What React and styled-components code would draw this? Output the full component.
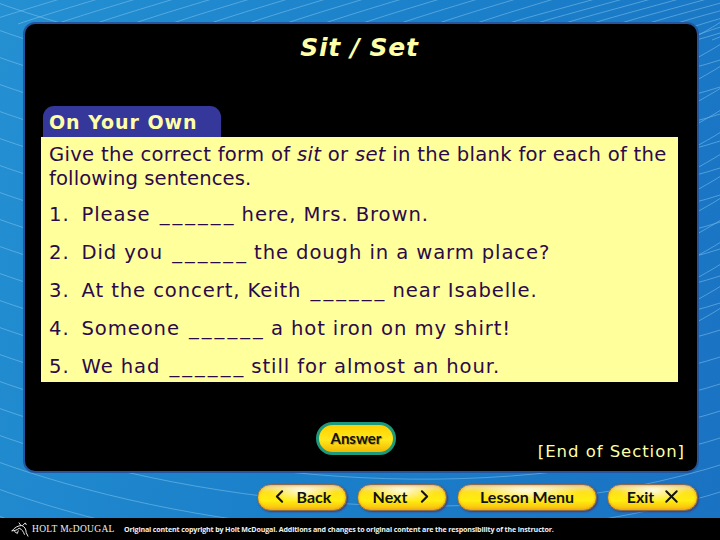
import React from "react";
import styled, { createGlobalStyle } from "styled-components";
import { ChevronLeft, ChevronRight, X } from "lucide-react";

const GlobalStyle = createGlobalStyle`
  html, body {
    margin: 0;
    padding: 0;
    background: #000;
  }
`;

const BLANK = "______";

const questions = [
  ["Please", "here, Mrs. Brown."],
  ["Did you", "the dough in a warm place?"],
  ["At the concert, Keith", "near Isabelle."],
  ["Someone", "a hot iron on my shirt!"],
  ["We had", "still for almost an hour."],
];

const Waves = () => {
  const lines = [];
  for (let i = 0; i < 22; i++) {
    const y = i * 27 - 40;
    lines.push(
      <path key={i} d={`M-10 ${y + 40} C 180 ${y + 110}, 480 ${y + 150}, 730 ${y + 70}`} />
    );
  }
  const upper = [];
  for (let i = 0; i < 14; i++) {
    upper.push(
      <path
        key={i}
        d={`M${460 + i * 28} 40 C ${510 + i * 28} 20, ${560 + i * 28} 10, ${640 + i * 28} -14`}
      />
    );
    upper.push(
      <path
        key={`r${i}`}
        d={`M690 ${40 + i * 22} C 700 ${34 + i * 22}, 712 ${28 + i * 22}, 724 ${20 + i * 22}`}
      />
    );
    upper.push(
      <path key={`t${i}`} d={`M${-20 + i * 38} 24 C ${10 + i * 38} 14, ${30 + i * 38} 8, ${70 + i * 38} -4`} />
    );
  }
  return (
    <WaveArt viewBox="0 0 720 518" preserveAspectRatio="none">
      <g fill="none" stroke="#8ccbf0" strokeWidth="0.7" opacity="0.7">
        {lines}
        {upper}
      </g>
    </WaveArt>
  );
};

const App = () => {
  return (
    <Page>
      <GlobalStyle />
      <Stage>
        <Waves />
        <Panel>
          <Title>Sit / Set</Title>
          <Tab>On Your Own</Tab>
          <Card>
            <Intro>
              Give the correct form of <em>sit</em> or <em>set</em> in the blank for each of the
              following sentences.
            </Intro>
            <Questions>
              {questions.map(([before, after], i) => (
                <Question key={i}>
                  <span>{i + 1}.</span>
                  <span>
                    {before} <Blank>{BLANK}</Blank> {after}
                  </span>
                </Question>
              ))}
            </Questions>
          </Card>
          <PanelBottom>
            <AnswerButton>Answer</AnswerButton>
            <EndNote>[End of Section]</EndNote>
          </PanelBottom>
        </Panel>
        <Nav>
          <NavButton $width={90} $shift={-2}>
            <ChevronLeft size={21} strokeWidth={2.4} />
            Back
          </NavButton>
          <NavButton $width={90} $shift={2}>
            Next
            <ChevronRight size={21} strokeWidth={2.4} />
          </NavButton>
          <NavButton $width={140}>Lesson Menu</NavButton>
          <NavButton $width={91} $shift={2}>
            Exit
            <X size={21} strokeWidth={2.2} />
          </NavButton>
        </Nav>
      </Stage>
      <Footer>
        <Logo viewBox="0 0 20 17">
          <g fill="none" stroke="#eee" strokeWidth="1.1" strokeLinecap="round">
            <path d="M1 10 C4 6 8 4 12 4 C15 5 17 8 17 12 L19 16" />
            <path d="M1 10 C4 10 7 9 9 7 C12 8 14 11 15 14" />
            <path d="M11 4 L9 1 M13 4 L16 1 L17 3" />
            <path d="M4 11 L7 13 L8 10" />
          </g>
        </Logo>
        <Brand>
          HOLT M<small>c</small>DOUGAL
        </Brand>
        <Legal>
          Original content copyright by Holt McDougal. Additions and changes to original content are
          the responsibility of the instructor.
        </Legal>
      </Footer>
    </Page>
  );
};

const Page = styled.div`
  width: 720px;
  height: 540px;
  display: flex;
  flex-direction: column;
  overflow: hidden;
  font-family: "DejaVu Sans", Verdana, sans-serif;
`;

const Stage = styled.div`
  position: relative;
  height: 518px;
  box-sizing: border-box;
  padding: 22px 21px 0 23px;
  display: flex;
  flex-direction: column;
  background: linear-gradient(110deg, #2490d2 0%, #1b80ca 50%, #1a72c2 100%);
`;

const WaveArt = styled.svg`
  position: absolute;
  inset: 0;
  width: 720px;
  height: 518px;
`;

const Panel = styled.div`
  position: relative;
  box-sizing: border-box;
  width: 676px;
  height: 451px;
  padding: 0 19px 0 16px;
  background: #000;
  border: 2px solid #24559f;
  border-radius: 12px;
  display: flex;
  flex-direction: column;
`;

const Title = styled.h1`
  margin: 0;
  height: 82px;
  padding-top: 8px;
  box-sizing: border-box;
  text-align: center;
  color: #ffffa8;
  font-size: 25px;
  line-height: 32px;
  font-weight: bold;
  font-style: italic;
  letter-spacing: 0.7px;
`;

const Tab = styled.div`
  box-sizing: border-box;
  width: 178px;
  height: 31px;
  margin-left: 2px;
  padding: 5px 0 0 6px;
  background: #35379b;
  border-radius: 11px 11px 0 0;
  color: #ffffa8;
  font-size: 19px;
  line-height: 23px;
  font-weight: bold;
  letter-spacing: 0.95px;
`;

const Card = styled.div`
  box-sizing: border-box;
  width: 637px;
  height: 245px;
  padding: 6px 8px 0;
  background: #ffff9c;
  color: #2b0a4a;
  font-size: 19.6px;
  line-height: 24px;
`;

const Intro = styled.p`
  margin: 0;
  letter-spacing: 0.1px;
  &::first-line {
    letter-spacing: 0.29px;
  }
`;

const Questions = styled.ol`
  list-style: none;
  margin: 12px 0 0;
  padding: 0;
  display: flex;
  flex-direction: column;
  gap: 14px;
`;

const Question = styled.li`
  display: flex;
  gap: 12px;
  letter-spacing: 0.9px;
`;

const Blank = styled.span`
  margin: 0 -2px 0 2px;
  letter-spacing: 3px;
`;

const PanelBottom = styled.div`
  display: flex;
  flex: 1;
  justify-content: space-between;
`;

const AnswerButton = styled.button`
  box-sizing: border-box;
  flex: none;
  width: 80px;
  height: 33px;
  margin: 40px 0 0 275px;
  padding: 0 0 2px;
  border: 3px solid #1d9a7c;
  border-radius: 17px;
  background: linear-gradient(180deg, #ffd000 0%, #ffe81c 55%, #f3b600 100%);
  color: #111;
  font-family: Lato, sans-serif;
  font-size: 15px;
  font-weight: 700;
  text-shadow: 1px 1px 0 #caa000;
  cursor: pointer;
`;

const EndNote = styled.div`
  flex: none;
  margin: 57px -7px 0 0;
  color: #ffffa8;
  font-size: 16.5px;
  line-height: 26px;
  letter-spacing: 0.95px;
  white-space: nowrap;
`;

const Nav = styled.div`
  position: relative;
  display: flex;
  gap: 10px;
  margin: 11px 0 0 234px;
`;

const NavButton = styled.button`
  box-sizing: border-box;
  flex: none;
  width: ${(props) => props.$width}px;
  height: 27px;
  padding: 0 ${(props) => Math.max(0, -(props.$shift || 0)) * 2}px 3px
    ${(props) => Math.max(0, props.$shift || 0) * 2}px;
  display: flex;
  align-items: center;
  justify-content: center;
  gap: 7px;
  border: 1px solid #8d6a4c;
  border-radius: 14px;
  background:
    radial-gradient(ellipse 38% 45% at 50% 22%, #fffbe0 0%, rgba(255, 240, 60, 0) 100%),
    linear-gradient(180deg, #e8dcc4 0%, #ffe21a 28%, #ffee10 62%, #f8b810 100%);
  box-shadow: inset 0 0 3px #e08a20, 1px 1px 2px #4c3a6a;
  color: #111;
  font-family: Lato, sans-serif;
  font-size: 16px;
  font-weight: 700;
  cursor: pointer;
`;

const Footer = styled.div`
  height: 22px;
  display: flex;
  align-items: center;
  padding-left: 11px;
  background: #000;
  color: #f0f0f0;
`;

const Logo = styled.svg`
  width: 18px;
  height: 15px;
  margin-right: 3px;
`;

const Brand = styled.span`
  width: 92px;
  font-family: "Liberation Serif", serif;
  font-size: 9.5px;
  letter-spacing: 0.3px;
  white-space: nowrap;
  small {
    font-size: 8px;
  }
`;

const Legal = styled.span`
  font-family: "Open Sans", sans-serif;
  font-size: 7.1px;
  font-weight: 700;
  letter-spacing: -0.15px;
  white-space: nowrap;
`;

export default App;
